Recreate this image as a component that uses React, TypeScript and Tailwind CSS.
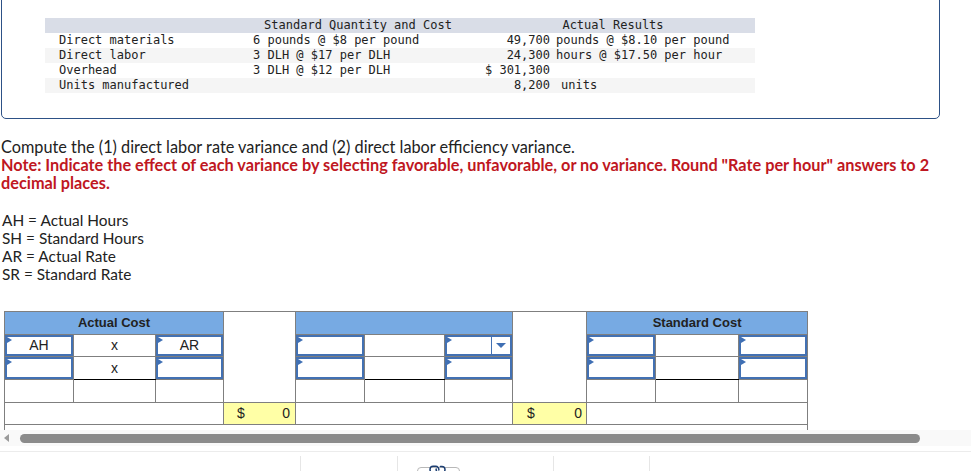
import React from 'react';
import { Link } from 'lucide-react';

const mono = { fontFamily: '"DejaVu Sans Mono", "Liberation Mono", monospace' };

const dataRows = [
  { label: 'Direct materials', std: '6 pounds @ $8 per pound', num: '49,700', rest: 'pounds @ $8.10 per pound', gap: 'ml-[6px]' },
  { label: 'Direct labor', std: '3 DLH @ $17 per DLH', num: '24,300', rest: 'hours @ $17.50 per hour', gap: 'ml-[6px]' },
  { label: 'Overhead', std: '3 DLH @ $12 per DLH', num: '$ 301,300', rest: '', gap: 'ml-[6px]' },
  { label: 'Units manufactured', std: '', num: '8,200', rest: 'units', gap: 'ml-[11px]' },
];

// widths of the 11 worksheet columns
const colW = ['w-[69px]', 'w-[82px]', 'w-[68px]', 'w-[72px]', 'w-[69px]', 'w-[80px]', 'w-[68px]', 'w-[74px]', 'w-[69px]', 'w-[83px]', 'w-[69px]'];

const cell = 'border border-[#7f7f7f] p-0';

const Tri = () => (
  <span className="absolute left-0 top-0 w-0 h-0 border-l-[5px] border-l-[#3f6fb4] border-y-[3px] border-y-transparent" />
);

const Inp: React.FC<{ text?: string; h?: string }> = ({ text, h = 'h-[21px]' }) => (
  <div className={`relative ${h} border-2 border-[#4371b3] flex items-center justify-center text-[14px] text-[#222]`}>
    <Tri />
    {text}
  </div>
);

const Sel = () => (
  <div className="relative h-[21px] border-2 border-[#4371b3] flex">
    <Tri />
    <div className="flex-1" />
    <div className="w-[19px] border-l border-[#4371b3] flex items-center justify-center">
      <span className="w-0 h-0 border-t-[5px] border-t-[#3f6fb4] border-x-[5px] border-x-transparent" />
    </div>
  </div>
);

const Total: React.FC<{ pl: string; pr: string }> = ({ pl, pr }) => (
  <td className={`${cell} bg-[#ffffa6]`}>
    <div className={`flex justify-between text-[14px] text-[#222] ${pl} ${pr}`}>
      <span>$</span>
      <span>0</span>
    </div>
  </td>
);

export default function App() {
  return (
    <div className="w-[971px] h-[471px] overflow-hidden bg-white text-[#222]">
      {/* given data */}
      <div className="ml-[1px] mt-[-12px] w-[939px] h-[131px] border border-[#2d5186] rounded-[5px] pt-[29px] pl-[43px]">
        <div className="w-[710px] text-[12px] leading-[15px] text-[#222]" style={mono}>
          <div className="grid grid-cols-[206px_214px_290px] bg-[#d9dde7]">
            <div />
            <div className="text-center">Standard Quantity and Cost</div>
            <div className="text-center pl-[6px]">Actual Results</div>
          </div>
          {dataRows.map((r, i) => (
            <div key={r.label} className={`grid grid-cols-[206px_214px_290px] ${i % 2 === 1 ? 'bg-[#f5f5f5]' : ''}`}>
              <div className="pl-[14px]">{r.label}</div>
              <div className="pl-[2px]">{r.std}</div>
              <div className="flex whitespace-pre">
                <span className="w-[85px] text-right">{r.num}</span>
                <span className={r.gap}>{r.rest}</span>
              </div>
            </div>
          ))}
        </div>
      </div>

      {/* instructions */}
      <div className="mt-[19px] pl-[1px] leading-[18px]" style={{ fontFamily: 'Lato, "Open Sans", sans-serif' }}>
        <div className="text-[16.3px]">
          <p className="text-[#222]">Compute the (1) direct labor rate variance and (2) direct labor efficiency variance.</p>
          <p className="font-bold text-[#bf1722]">
            Note: Indicate the effect of each variance by selecting favorable, unfavorable, or no variance. Round "Rate per hour" answers to 2
            <br />
            decimal places.
          </p>
        </div>
        <div className="mt-[19px] pl-[1px] text-[15.4px]">
          <p>AH = Actual Hours</p>
          <p>SH = Standard Hours</p>
          <p>AR = Actual Rate</p>
          <p>SR = Standard Rate</p>
        </div>
      </div>

      {/* worksheet */}
      <div className="mt-[28px] h-[119px] overflow-hidden pl-[4px]" style={{ fontFamily: '"Liberation Sans", Arial, sans-serif' }}>
        <table className="table-fixed border-collapse w-[803px]">
          <colgroup>
            {colW.map((w, i) => (
              <col key={i} className={w} />
            ))}
          </colgroup>
          <tbody>
            <tr className="h-[23px]">
              <td colSpan={3} className={`${cell} bg-[#77aae3] text-center text-[13px] font-bold text-[#222]`}>Actual Cost</td>
              <td rowSpan={4} className={cell} />
              <td colSpan={3} className={`${cell} bg-[#77aae3]`} />
              <td rowSpan={4} className={cell} />
              <td colSpan={3} className={`${cell} bg-[#77aae3] text-center text-[13px] font-bold text-[#222]`}>Standard Cost</td>
            </tr>
            <tr className="h-[22px]">
              <td className={cell}><Inp text="AH" /></td>
              <td className={`${cell} text-center text-[14px]`}>x</td>
              <td className={cell}><Inp text="AR" /></td>
              <td className={cell}><Inp /></td>
              <td className={cell} />
              <td className={cell}><Sel /></td>
              <td className={cell}><Inp /></td>
              <td className={cell} />
              <td className={cell}><Inp /></td>
            </tr>
            <tr className="h-[23px]">
              <td className={cell}><Inp h="h-[22px]" /></td>
              <td className={`${cell} border-b-black text-center text-[14px]`}>x</td>
              <td className={cell}><Inp h="h-[22px]" /></td>
              <td className={cell}><Inp h="h-[22px]" /></td>
              <td className={`${cell} border-b-black`} />
              <td className={cell}><Inp h="h-[22px]" /></td>
              <td className={cell}><Inp h="h-[22px]" /></td>
              <td className={`${cell} border-b-black`} />
              <td className={cell}><Inp h="h-[22px]" /></td>
            </tr>
            <tr className="h-[23px]">
              {Array.from({ length: 9 }).map((_, i) => (
                <td key={i} className={cell} />
              ))}
            </tr>
            <tr className="h-[22px]">
              <td colSpan={3} className={cell} />
              <Total pl="pl-[13px]" pr="pr-[5px]" />
              <td colSpan={3} className={cell} />
              <Total pl="pl-[14px]" pr="pr-[4px]" />
              <td colSpan={3} className={cell} />
            </tr>
            <tr className="h-[24px]">
              <td colSpan={11} className={cell} />
            </tr>
          </tbody>
        </table>
      </div>

      {/* horizontal scroller */}
      <div className="h-[16px] bg-[#f9f9f9] flex items-center">
        <span className="ml-[4px] w-0 h-0 border-r-[5px] border-r-[#9a9a9a] border-y-[4px] border-y-transparent" />
        <div className="ml-[11px] w-[900px] h-[9px] rounded-full bg-[#8b8b8b]" />
      </div>

      {/* bottom toolbar */}
      <div className="mt-[5px] border-t border-[#ececec] flex h-[30px]">
        <div className="w-[300px]" />
        <div className="w-[97px] border-l border-[#e6e6e6] mt-[4px]" />
        <div className="w-[156px] border-l border-[#e6e6e6] mt-[4px] pl-[19px]">
          <div className="relative mt-[11px] w-[43px] h-[20px] border border-[#b8b8b8] rounded-[4px] bg-white">
            <Link size={15} strokeWidth={2.4} className="absolute left-[12px] top-[-6px] rotate-45 text-[#1d3f72]" />
          </div>
        </div>
        <div className="w-[96px] border-l border-[#e6e6e6] mt-[4px]" />
        <div className="flex-1 border-l border-[#e6e6e6] mt-[4px]" />
      </div>
    </div>
  );
}
